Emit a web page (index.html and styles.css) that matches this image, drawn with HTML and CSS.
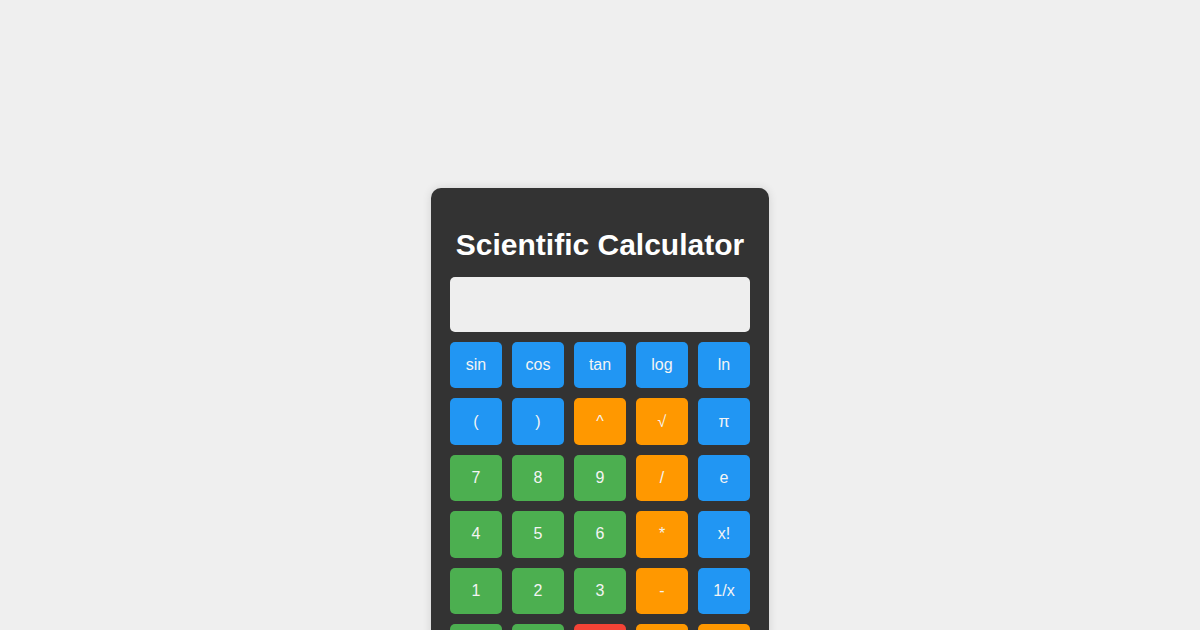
FILE: index.html
```html
<!DOCTYPE html>
<html lang="en">
<head>
<meta charset="utf-8">
<title>Scientific Calculator</title>
<link rel="stylesheet" href="styles.css">
</head>
<body>
<div class="calculator">
  <h1 class="title">Scientific Calculator</h1>
  <input class="display" type="text" readonly>
  <div class="keys">
    <button class="key fn">sin</button>
    <button class="key fn">cos</button>
    <button class="key fn">tan</button>
    <button class="key fn">log</button>
    <button class="key fn">ln</button>

    <button class="key fn">(</button>
    <button class="key fn">)</button>
    <button class="key op">^</button>
    <button class="key op">√</button>
    <button class="key fn">π</button>

    <button class="key num">7</button>
    <button class="key num">8</button>
    <button class="key num">9</button>
    <button class="key op">/</button>
    <button class="key fn">e</button>

    <button class="key num">4</button>
    <button class="key num">5</button>
    <button class="key num">6</button>
    <button class="key op">*</button>
    <button class="key fn">x!</button>

    <button class="key num">1</button>
    <button class="key num">2</button>
    <button class="key num">3</button>
    <button class="key op">-</button>
    <button class="key fn">1/x</button>

    <button class="key num">0</button>
    <button class="key num">.</button>
    <button class="key clear">C</button>
    <button class="key op">+</button>
    <button class="key op">=</button>
  </div>
</div>
</body>
</html>
```

FILE: styles.css
```css
html, body {
  margin: 0;
  padding: 0;
}
body {
  background: #efefef;
  font-family: "Liberation Sans", Arial, sans-serif;
  display: flex;
  flex-direction: column;
  align-items: center;
  padding-top: 188px;
  min-height: 100vh;
  box-sizing: border-box;
}
.calculator {
  background: #333333;
  border-radius: 10px;
  padding: 19px;
  width: 300px;
  box-shadow: 0 0 10px rgba(0, 0, 0, 0.12);
}
.title {
  color: #ffffff;
  font-size: 30px;
  font-weight: bold;
  text-align: center;
  margin: 21px 0 15px;
  line-height: 34px;
}
.display {
  display: block;
  box-sizing: border-box;
  width: 300px;
  height: 55px;
  border: none;
  border-radius: 5px;
  background: #eeeeee;
  margin: 0 0 10px;
  padding: 0 10px;
  font-size: 24px;
  text-align: right;
  font-family: inherit;
  outline: none;
}
.keys {
  display: grid;
  grid-template-columns: repeat(5, 52px);
  grid-auto-rows: 46.4px;
  gap: 10px;
}
.key {
  border: none;
  border-radius: 5px;
  color: #f4f4f4;
  font-family: inherit;
  font-size: 16px;
  padding: 0;
  cursor: pointer;
}
.fn { background: #2196f3; }
.op { background: #ff9800; }
.num { background: #4caf50; }
.clear { background: #f44336; }
```
